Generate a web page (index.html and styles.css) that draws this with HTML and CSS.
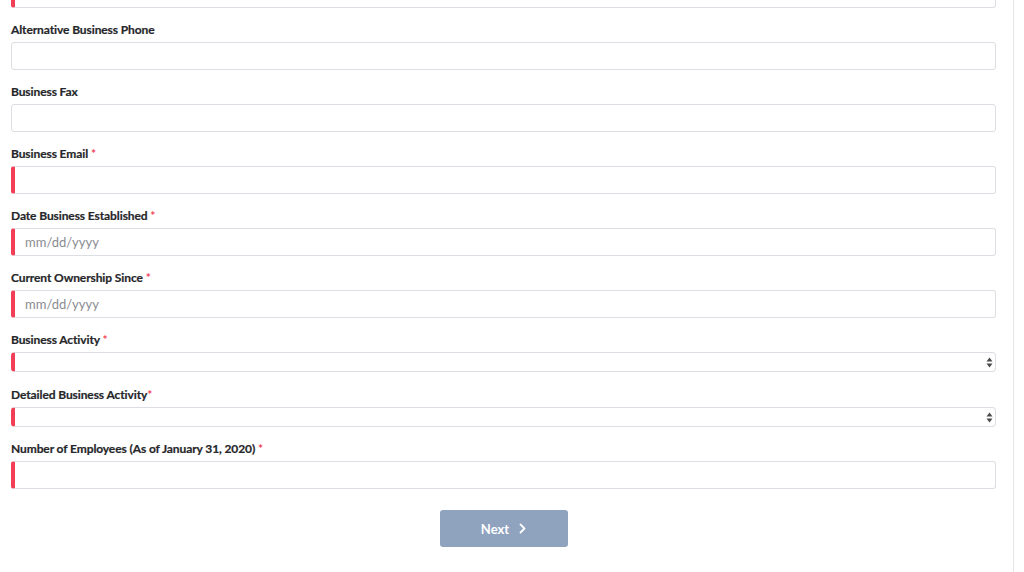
FILE: index.html
```html
<!DOCTYPE html>
<html>
<head>
<meta charset="utf-8">
<link rel="stylesheet" href="styles.css">
</head>
<body>
<div class="page">
  <form class="form">
    <div class="field first">
      <input class="input req" type="text">
    </div>
    <div class="field">
      <label class="label">Alternative Business Phone</label>
      <input class="input" type="text">
    </div>
    <div class="field">
      <label class="label">Business Fax</label>
      <input class="input" type="text">
    </div>
    <div class="field">
      <label class="label">Business Email <span class="star">*</span></label>
      <input class="input req" type="text">
    </div>
    <div class="field">
      <label class="label">Date Business Established <span class="star">*</span></label>
      <input class="input req" type="text" placeholder="mm/dd/yyyy">
    </div>
    <div class="field">
      <label class="label">Current Ownership Since <span class="star">*</span></label>
      <input class="input req" type="text" placeholder="mm/dd/yyyy">
    </div>
    <div class="field sel">
      <label class="label">Business Activity <span class="star">*</span></label>
      <div class="select-wrap">
        <select class="select req"><option></option></select>
        <svg class="arrows" width="7" height="11" viewBox="0 0 7 11"><path d="M3.5 0.5 L6.5 4.5 L0.5 4.5 Z M3.5 10.5 L6.5 6.5 L0.5 6.5 Z" fill="#4a4a4a"/></svg>
      </div>
    </div>
    <div class="field">
      <label class="label">Detailed Business Activity<span class="star">*</span></label>
      <div class="select-wrap">
        <select class="select req"><option></option></select>
        <svg class="arrows" width="7" height="11" viewBox="0 0 7 11"><path d="M3.5 0.5 L6.5 4.5 L0.5 4.5 Z M3.5 10.5 L6.5 6.5 L0.5 6.5 Z" fill="#4a4a4a"/></svg>
      </div>
    </div>
    <div class="field">
      <label class="label">Number of Employees (As of January 31, 2020) <span class="star">*</span></label>
      <input class="input req" type="text">
    </div>
    <div class="actions">
      <button class="btn" type="button">Next
        <svg class="chev" width="7" height="11" viewBox="0 0 7 11"><path d="M1.5 1.5 L5.5 5.5 L1.5 9.5" fill="none" stroke="#fff" stroke-width="1.8" stroke-linecap="round" stroke-linejoin="round"/></svg>
      </button>
    </div>
  </form>
</div>
</body>
</html>
```

FILE: styles.css
```css
* { box-sizing: border-box; }
html, body { margin: 0; padding: 0; background: #fff; }
body { font-family: "Lato", "Liberation Sans", sans-serif; color: #333; }
.page {
  width: 1014px;
  min-height: 572px;
  border-right: 1px solid #e6e7ea;
  overflow: hidden;
}
.form {
  padding: 0 17px 0 11px;
  display: flex;
  flex-direction: column;
}
.field {
  display: flex;
  flex-direction: column;
  margin-bottom: 14px;
}
.field.sel { margin-bottom: 15px; }
.field.first { margin-top: -20px; margin-bottom: 14px; }
.label {
  font-size: 12px;
  font-weight: 700;
  line-height: 16px;
  color: #26272a;
  margin-bottom: 4px;
  letter-spacing: -0.1px;
  -webkit-text-stroke: 0.2px #26272a;
}
.star { color: #f23f57; -webkit-text-stroke: 0; }
.input {
  display: block;
  width: 100%;
  height: 28px;
  border: 1px solid #dcdee3;
  border-radius: 3px;
  background: #fff;
  font-family: "Lato", "Liberation Sans", sans-serif;
  font-size: 13px;
  padding: 0 10px 0 13px;
  outline: none;
}
.input.req { border-left: 4px solid #f23f57; padding-left: 10px; }
.input::placeholder { color: #8a8c91; }
.select-wrap { position: relative; }
.select {
  display: block;
  width: 100%;
  height: 20px;
  border: 1px solid #dcdee3;
  border-radius: 4px;
  background: #fff;
  -webkit-appearance: none;
  appearance: none;
  font-size: 12px;
  outline: none;
}
.select.req { border-left: 4px solid #f23f57; }
.arrows { position: absolute; right: 3px; top: 5px; }
.actions {
  display: flex;
  justify-content: center;
  margin-top: 7px;
}
.btn {
  width: 128px;
  height: 37px;
  background: #8fa3bf;
  border: none;
  border-radius: 3px;
  color: #fff;
  font-family: "Lato", "Liberation Sans", sans-serif;
  font-size: 13px;
  font-weight: 700;
  display: flex;
  align-items: center;
  justify-content: center;
  gap: 10px;
  padding: 0;
}
.chev { display: block; }
```
